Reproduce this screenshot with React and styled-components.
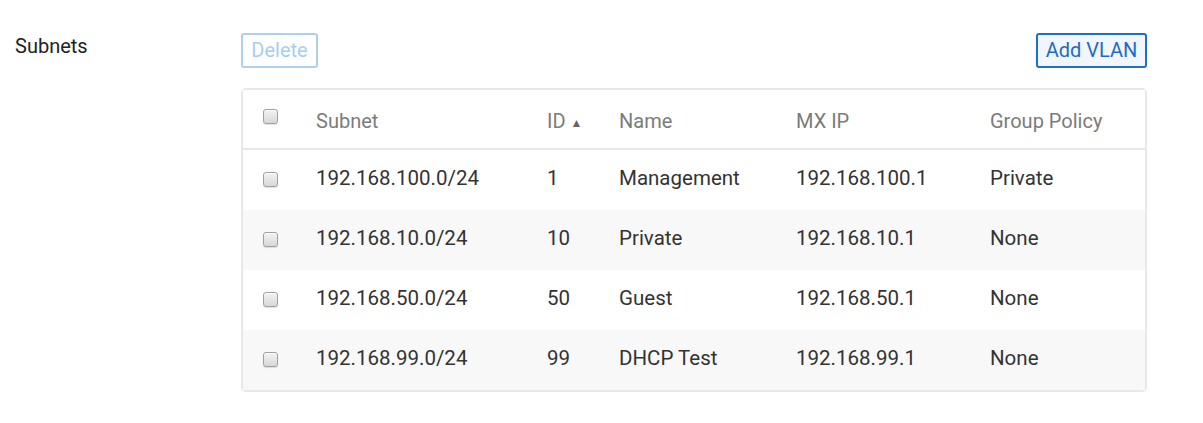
import React from 'react';
import styled, { createGlobalStyle } from 'styled-components';

const GlobalStyle = createGlobalStyle`
    body {
        margin: 0;
        background: #fff;
        font-family: Roboto, "Liberation Sans", Arial, sans-serif;
        color: #333;
    }
`

const Page = styled.div`
    display: flex;
    padding: 33px 0 0 15px;
`

const SectionLabel = styled.div`
    width: 226px;
    font-size: 20px;
    line-height: 26px;
    color: #222;
`

const Content = styled.div`
    width: 906px;
    display: flex;
    flex-direction: column;
    gap: 20px;
`

const Toolbar = styled.div`
    display: flex;
    justify-content: space-between;
    align-items: center;
`

const Button = styled.button`
    box-sizing: border-box;
    height: 35px;
    width: ${p => p.$width}px;
    padding: 0 0 2px;
    font-family: inherit;
    font-size: 20px;
    border-radius: 3px;
    border: 2px solid ${p => (p.disabled ? '#acd0f2' : '#1d6fcb')};
    color: ${p => (p.disabled ? '#a9cdf0' : '#1f6bc4')};
    background: ${p => (p.disabled ? '#fff' : '#f1f6fd')};
`

const Table = styled.div`
    border: 2px solid #e8e8e8;
    border-radius: 5px;
`

const Row = styled.div`
    display: grid;
    grid-template-columns: 73px 231px 72px 177px 194px 1fr;
    align-items: center;
    height: 60px;
    font-size: 20.5px;
    background: ${p => (p.$striped ? '#f8f8f8' : '#fff')};
`

const HeadRow = styled(Row)`
    height: 58px;
    font-size: 20px;
    color: #7b7b7b;
    border-bottom: 2px solid #e8e8e8;
`

const CheckCell = styled.div`
    padding-left: 20px;
    display: flex;
    align-items: center;
    margin-top: ${p => (p.$head ? '-6px' : '-2px')};
`

const Checkbox = styled.span`
    box-sizing: border-box;
    width: 15px;
    height: 15px;
    border-radius: 3px;
    border: 1px solid #a0a0a0;
    background: linear-gradient(#f2f2f2, #d8d8d8);
    box-shadow: inset 0 1px 0 #fff, 0 1px 1px rgba(0, 0, 0, 0.12);
`

const Cell = styled.div`
    white-space: nowrap;
    padding-bottom: 4px;
`

const HeadCell = styled.div`
    white-space: nowrap;
    padding-top: 4px;
`

const SortArrow = styled.span`
    font-size: 12px;
    color: #666;
    margin-left: 5px;
    vertical-align: 1px;
`

const subnets = [
    { subnet: '192.168.100.0/24', id: '1', name: 'Management', ip: '192.168.100.1', policy: 'Private' },
    { subnet: '192.168.10.0/24', id: '10', name: 'Private', ip: '192.168.10.1', policy: 'None' },
    { subnet: '192.168.50.0/24', id: '50', name: 'Guest', ip: '192.168.50.1', policy: 'None' },
    { subnet: '192.168.99.0/24', id: '99', name: 'DHCP Test', ip: '192.168.99.1', policy: 'None' },
]

export default function App() {
    return (
        <Page>
            <GlobalStyle />
            <SectionLabel>Subnets</SectionLabel>
            <Content>
                <Toolbar>
                    <Button $width={77} disabled>Delete</Button>
                    <Button $width={111}>Add VLAN</Button>
                </Toolbar>
                <Table>
                    <HeadRow>
                        <CheckCell $head><Checkbox /></CheckCell>
                        <HeadCell>Subnet</HeadCell>
                        <HeadCell>ID<SortArrow>▲</SortArrow></HeadCell>
                        <HeadCell>Name</HeadCell>
                        <HeadCell>MX IP</HeadCell>
                        <HeadCell>Group Policy</HeadCell>
                    </HeadRow>
                    {subnets.map((s, i) => (
                        <Row key={s.id} $striped={i % 2 === 1}>
                            <CheckCell><Checkbox /></CheckCell>
                            <Cell>{s.subnet}</Cell>
                            <Cell>{s.id}</Cell>
                            <Cell>{s.name}</Cell>
                            <Cell>{s.ip}</Cell>
                            <Cell>{s.policy}</Cell>
                        </Row>
                    ))}
                </Table>
            </Content>
        </Page>
    )
}
